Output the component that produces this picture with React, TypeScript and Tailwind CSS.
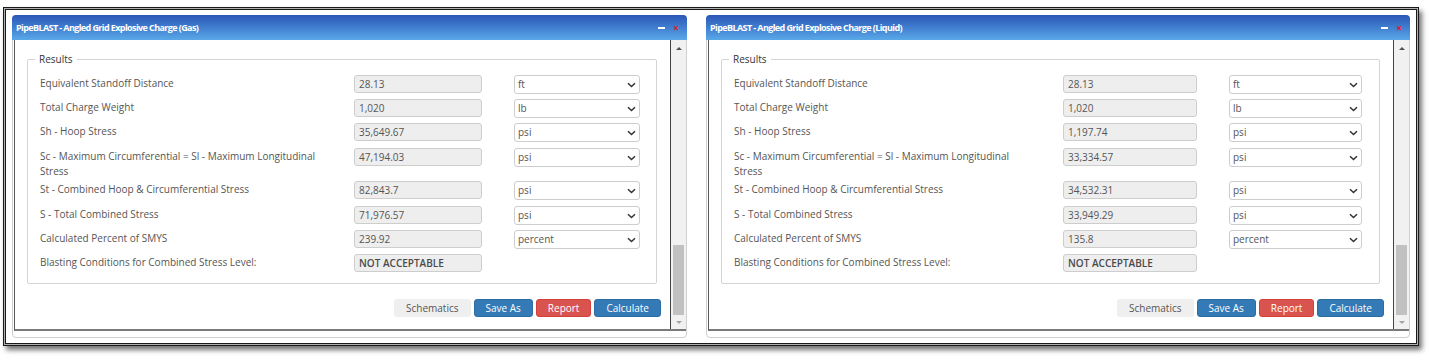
import React from "react";

type Row = { label: string; value: string; unit?: string; h: string; bold?: boolean };

const gasRows: Row[] = [
  { label: "Equivalent Standoff Distance", value: "28.13", unit: "ft", h: "h-[24px]" },
  { label: "Total Charge Weight", value: "1,020", unit: "lb", h: "h-[24px]" },
  { label: "Sh - Hoop Stress", value: "35,649.67", unit: "psi", h: "h-[25px]" },
  { label: "Sc - Maximum Circumferential = Sl - Maximum Longitudinal Stress", value: "47,194.03", unit: "psi", h: "h-[33px]" },
  { label: "St - Combined Hoop & Circumferential Stress", value: "82,843.7", unit: "psi", h: "h-[25px]" },
  { label: "S - Total Combined Stress", value: "71,976.57", unit: "psi", h: "h-[24px]" },
  { label: "Calculated Percent of SMYS", value: "239.92", unit: "percent", h: "h-[24px]" },
  { label: "Blasting Conditions for Combined Stress Level:", value: "NOT ACCEPTABLE", h: "h-[24px]", bold: true },
];

const liquidRows: Row[] = [
  { label: "Equivalent Standoff Distance", value: "28.13", unit: "ft", h: "h-[24px]" },
  { label: "Total Charge Weight", value: "1,020", unit: "lb", h: "h-[24px]" },
  { label: "Sh - Hoop Stress", value: "1,197.74", unit: "psi", h: "h-[25px]" },
  { label: "Sc - Maximum Circumferential = Sl - Maximum Longitudinal Stress", value: "33,334.57", unit: "psi", h: "h-[33px]" },
  { label: "St - Combined Hoop & Circumferential Stress", value: "34,532.31", unit: "psi", h: "h-[25px]" },
  { label: "S - Total Combined Stress", value: "33,949.29", unit: "psi", h: "h-[24px]" },
  { label: "Calculated Percent of SMYS", value: "135.8", unit: "percent", h: "h-[24px]" },
  { label: "Blasting Conditions for Combined Stress Level:", value: "NOT ACCEPTABLE", h: "h-[24px]", bold: true },
];

type Cfg = {
  title: string;
  winW: string;
  labelW: string;
  inputW: string;
  selW: string;
  rows: Row[];
};

const gasCfg: Cfg = {
  title: "PipeBLAST - Angled Grid Explosive Charge (Gas)",
  winW: "w-[675px]",
  labelW: "w-[314px]",
  inputW: "w-[128px]",
  selW: "w-[126px]",
  rows: gasRows,
};

const liquidCfg: Cfg = {
  title: "PipeBLAST - Angled Grid Explosive Charge (Liquid)",
  winW: "w-[704px]",
  labelW: "w-[329px]",
  inputW: "w-[134px]",
  selW: "w-[133px]",
  rows: liquidRows,
};

function Chevron() {
  return (
    <svg width="9" height="6" viewBox="0 0 9 6">
      <path d="M1 1.2 L4.5 4.5 L8 1.2" stroke="#333" strokeWidth="1.5" fill="none" />
    </svg>
  );
}

function Window({ cfg }: { cfg: Cfg }) {
  return (
    <div className={`${cfg.winW} h-[323px] flex flex-col rounded-[4px] border border-[#cfcfcf] bg-white`}>
      {/* title bar */}
      <div className="h-[25px] shrink-0 -mx-px -mt-px rounded-t-[4px] bg-gradient-to-b from-[#2c55b6] to-[#5aa8e8] flex items-center pl-[4px] pr-[8px]">
        <span className="text-white font-bold text-[9px] tracking-[-0.6px] leading-none">{cfg.title}</span>
        <div className="flex-1" />
        <div className="w-[7px] h-[2px] bg-white mr-[8px]" />
        <span className="text-[#e8141c] font-bold text-[10px] leading-none">×</span>
      </div>
      {/* body */}
      <div className="flex-1 pl-px pb-[6px] flex">
        <div className="flex-1 flex border-l border-l-[#5a5a5a] border-b-2 border-b-[#7a7a7a]">
          <div className="flex-1 flex flex-col pt-[12px] pl-[12px] pr-[13px]">
            <fieldset className="border border-[#d4d4d4] rounded-[2px] pl-[12px] pt-[9px] pb-[5px]">
              <legend className="ml-[-5px] px-[4px] text-[10px] leading-[14px] text-[#333]">Results</legend>
              {cfg.rows.map((r) => (
                <div key={r.label} className={`flex items-start ${r.h}`}>
                  <div className={`${cfg.labelW} shrink-0`}>
                    <div className="max-w-[292px] text-[10px] leading-[15px] pt-px text-[#555]">{r.label}</div>
                  </div>
                  <div
                    className={`${cfg.inputW} shrink-0 h-[18px] rounded-[3px] border border-[#cdcdcd] bg-[#eeeeee] pl-[4px] text-[10px] leading-[16px] ${
                      r.bold ? "font-semibold text-[#4a4a4a]" : "text-[#555]"
                    }`}
                  >
                    {r.value}
                  </div>
                  <div className="w-[32px] shrink-0" />
                  {r.unit && (
                    <div
                      className={`${cfg.selW} shrink-0 h-[19px] rounded-[3px] border border-[#cdcdcd] bg-white pl-[3px] pr-[3px] flex items-center justify-between text-[10px] text-[#555]`}
                    >
                      <span>{r.unit}</span>
                      <Chevron />
                    </div>
                  )}
                </div>
              ))}
            </fieldset>
            <div className="flex justify-end gap-[3px] mt-[15px] mr-[-4px] text-[10px] leading-[16px]">
              <button className="h-[18px] px-[12px] rounded-[3px] bg-[#efefef] text-[#555]">Schematics</button>
              <button className="h-[18px] px-[11px] rounded-[3px] bg-[#337ab7] border border-[#2e6da4] text-white">Save As</button>
              <button className="h-[18px] px-[11px] rounded-[3px] bg-[#d9534f] border border-[#d43f3a] text-white">Report</button>
              <button className="h-[18px] px-[11px] rounded-[3px] bg-[#337ab7] border border-[#2e6da4] text-white">Calculate</button>
            </div>
          </div>
          {/* scrollbar */}
          <div className="w-[16px] shrink-0 border-l border-l-[#444] bg-[#f1f1f1] flex flex-col items-center">
            <div className="h-[16px] flex items-center justify-center">
              <div className="w-0 h-0 border-l-[3px] border-r-[3px] border-b-[3px] border-l-transparent border-r-transparent border-b-[#505050]" />
            </div>
            <div className="flex-1" />
            <div className="w-[11px] h-[70px] bg-[#c1c1c1]" />
            <div className="h-[14px] flex items-center justify-center">
              <div className="w-0 h-0 border-l-[3px] border-r-[3px] border-t-[3px] border-l-transparent border-r-transparent border-t-[#a3a3a3]" />
            </div>
          </div>
        </div>
      </div>
    </div>
  );
}

export default function App() {
  return (
    <div className="w-[1429px] h-[360px] bg-white font-['Open_Sans',sans-serif] overflow-hidden">
      <div className="ml-[3px] mt-[7px] w-[1416px] h-[339px] border border-[#1a1a1a] bg-[#b0b0b0] p-px shadow-[3px_4px_5px_rgba(0,0,0,0.55)]">
        <div className="w-full h-full border border-[#1a1a1a] bg-white pl-[6px] pt-[5px] flex gap-[19px]">
          <Window cfg={gasCfg} />
          <Window cfg={liquidCfg} />
        </div>
      </div>
    </div>
  );
}
